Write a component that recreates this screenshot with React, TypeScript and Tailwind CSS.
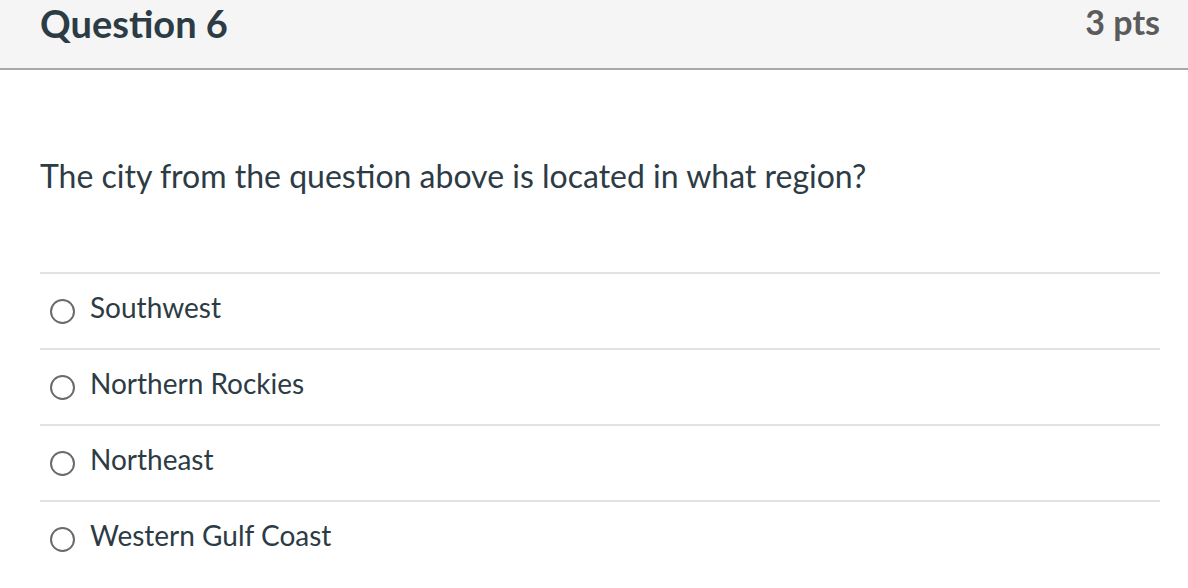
import React from "react";

const options = ["Southwest", "Northern Rockies", "Northeast", "Western Gulf Coast"];

export default function App() {
  return (
    <div className="w-[1188px] h-[588px] bg-white overflow-hidden font-['Lato','Noto_Sans',sans-serif]">
      {/* Question header */}
      <div className="h-[70px] bg-[#f5f5f5] border-b-2 border-[#a8a8a8] flex justify-between items-start pl-[40px] pr-[28px]">
        <h2 className="text-[38px] leading-[47px] font-bold text-[#2d3b45]">Question 6</h2>
        <span className="text-[34px] leading-[44px] font-bold text-[#5b5b5b]">3 pts</span>
      </div>

      <div className="pl-[40px] pr-[28px]">
        <p className="pt-[86px] text-[32px] leading-[40px] text-[#2d3b45]">
          The city from the question above is located in what region?
        </p>

        {/* Answers */}
        <div className="mt-[76px]">
          {options.map((opt) => (
            <label key={opt} className="h-[76px] border-t-2 border-[#e2e2e2] flex items-center gap-[15px] pl-[10px] pb-[8px]">
              <span className="w-[25px] h-[25px] rounded-full border-2 border-[#6b6b6b] bg-white shrink-0 mt-[8px]" />
              <span className="text-[28px] text-[#2d3b45]">{opt}</span>
            </label>
          ))}
        </div>
      </div>
    </div>
  );
}
